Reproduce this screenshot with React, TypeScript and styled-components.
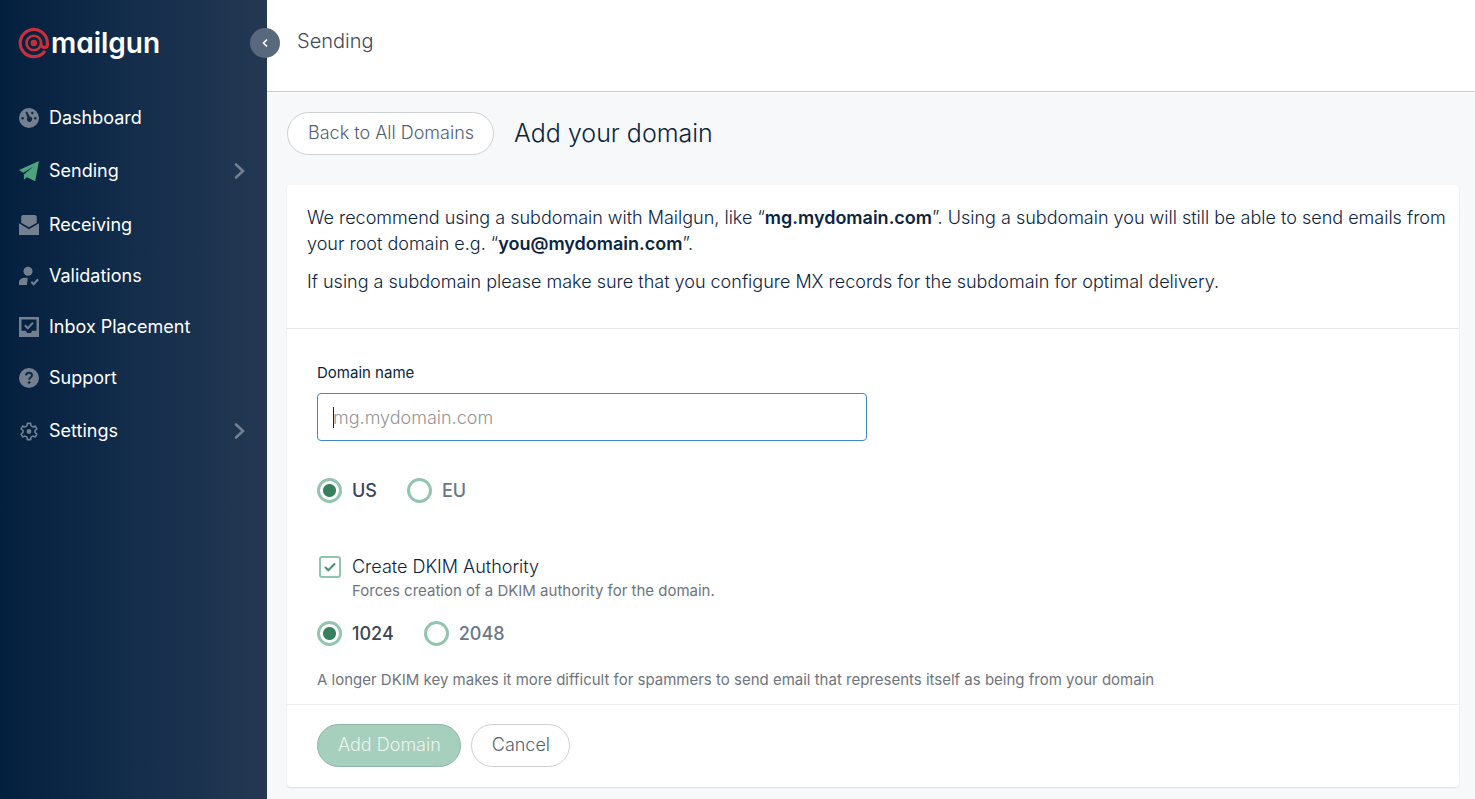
import React from "react";
import styled, { createGlobalStyle, css } from "styled-components";

const GlobalStyle = createGlobalStyle`
  *, *::before, *::after { box-sizing: border-box; }
  body {
    margin: 0;
    background: #f7f8fa;
    color: #0b2540;
    font-family: Inter, "Liberation Sans", sans-serif;
    font-size: 18px;
    font-weight: 300;
    line-height: 26px;
  }
  button, input { font: inherit; }
`;

const Page = styled.div`
  display: flex;
  min-height: 100vh;
`;

const Sidebar = styled.aside`
  position: relative;
  flex: 0 0 267px;
  background: linear-gradient(90deg, #04203f 0%, #132d4b 50%, #243852 100%);
`;

const LogoLink = styled.a`
  display: flex;
  height: 92px;
  padding: 16px 18px 0;
  text-decoration: none;
`;

const CollapseButton = styled.button`
  position: absolute;
  top: 28px;
  right: -13px;
  display: flex;
  align-items: center;
  justify-content: center;
  width: 30px;
  height: 30px;
  padding: 0;
  border: 0;
  border-radius: 50%;
  background: #58687d;
  color: #fff;
`;

const NavList = styled.ul`
  margin: 0;
  padding: 0;
  list-style: none;
`;

const NavLink = styled.a<{ $expandable?: boolean }>`
  display: flex;
  align-items: center;
  gap: 10px;
  height: ${(p) => (p.$expandable ? 56 : 51)}px;
  padding: 0 21px 0 19px;
  color: #fff;
  font-weight: 400;
  text-decoration: none;
`;

const NavIcon = styled.svg<{ $active?: boolean }>`
  flex: none;
  width: 20px;
  height: 20px;
  color: ${(p) => (p.$active ? "#4fa37c" : "#74808f")};
`;

const NavLabel = styled.span`
  flex: 1;
`;

const NavChevron = styled.svg`
  width: 12px;
  height: 18px;
  color: #74808f;
`;

const Main = styled.main`
  flex: 1;
  min-width: 0;
`;

const TopBar = styled.header`
  height: 92px;
  padding: 28px 30px 0;
  border-bottom: 1px solid #cbcdd0;
  background: #fff;
  color: #3f4b5b;
  font-size: 20px;
`;

const Content = styled.div`
  padding: 20px 16px 12px 20px;
`;

const TitleRow = styled.div`
  display: flex;
  align-items: center;
  gap: 20px;
  margin-bottom: 30px;
`;

const Title = styled.h1`
  margin: 0;
  font-size: 25px;
  font-weight: 300;
  line-height: 43px;
`;

const pill = css`
  display: inline-block;
  height: 43px;
  padding: 0 19px 2px 20px;
  border: 1px solid #cdd0d4;
  border-radius: 22px;
  background: #fff;
  color: #4f5f74;
  line-height: 39px;
`;

const BackLink = styled.a`
  ${pill}
  text-decoration: none;
`;

const Button = styled.button<{ $primary?: boolean }>`
  ${pill}
  ${(p) =>
    p.$primary &&
    css`
      border-color: #8db5a2;
      background: #a6cfbd;
      color: #e9f6ef;
    `}
`;

const Card = styled.section`
  border-radius: 4px;
  background: #fff;
  box-shadow: 0 1px 2px rgba(20, 40, 70, 0.12);
`;

const Intro = styled.div`
  padding: 20px 4px 33px 20px;
  border-bottom: 1px solid #e4e6e9;
`;

const Paragraph = styled.p`
  margin: 0 0 12px;
  &:last-child { margin: 0; }
`;

const Strong = styled.strong`
  font-weight: 600;
`;

const Fields = styled.div`
  padding: 33px 30px 13px;
`;

const FieldLabel = styled.label`
  display: block;
  margin-bottom: 10px;
  font-size: 15px;
  font-weight: 400;
  line-height: 21px;
`;

const TextInput = styled.input`
  display: block;
  width: 100%;
  max-width: 550px;
  height: 48px;
  padding: 0 15px;
  border: 1px solid #3f87c8;
  border-radius: 4px;
  outline: 0;
  background: linear-gradient(#0b2540, #0b2540) 15px center / 1px 21px no-repeat #fff;
  color: #0b2540;
  &::placeholder { color: #959595; opacity: 1; }
`;

const RadioGroup = styled.fieldset`
  display: flex;
  gap: 30px;
  margin: 0;
  padding: 0;
  border: 0;
`;

const RegionGroup = styled(RadioGroup)`
  margin: 36px 0 50px;
`;

const RadioLabel = styled.label`
  display: flex;
  align-items: center;
  gap: 10px;
  color: #6b7786;
  font-weight: 500;
  &:has(input:checked) { color: #3b4657; }
`;

const RadioText = styled.span`
  padding-top: 1px;
`;

const Radio = styled.input`
  appearance: none;
  width: 25px;
  height: 25px;
  margin: 0;
  border: 3px solid #92c5ad;
  border-radius: 50%;
  background: #fff;
  &:checked { background: radial-gradient(circle, #37805d 6px, #fff 7px); }
`;

const CheckRow = styled.div`
  display: grid;
  grid-template-columns: 25px 1fr;
  column-gap: 10px;
  align-items: center;
  margin-bottom: 18px;
`;

const Checkbox = styled.input`
  appearance: none;
  justify-self: center;
  width: 22px;
  height: 22px;
  margin: 0;
  border: 2px solid #92c5ad;
  border-radius: 3px;
  background: #fff;
`;

const CheckBoxCell = styled.span`
  position: relative;
  display: grid;
  place-items: center;
`;

const CheckMark = styled.svg`
  position: absolute;
  width: 12px;
  height: 10px;
  pointer-events: none;
`;

const Hint = styled.p`
  margin: 0;
  color: #6e7480;
  font-size: 15px;
  font-weight: 400;
  line-height: 22px;
`;

const CheckHint = styled(Hint)`
  grid-column: 2;
`;

const KeyHint = styled(Hint)`
  margin-top: 22px;
`;

const Actions = styled.div`
  display: flex;
  gap: 10px;
  padding: 19px 30px 20px;
  border-top: 1px solid #eff0f2;
`;

const Wordmark = styled.text`
  fill: #fff;
  font-family: "Liberation Sans Narrow", Inter, "Liberation Sans", sans-serif;
  font-size: 28px;
  font-weight: 600;
  font-feature-settings: "cv11";
`;

function Logo() {
  return (
    <svg width="150" height="50" viewBox="0 0 150 50" role="img" aria-label="mailgun">
      <g fill="none" stroke="#c5303a">
        <circle cx="15.8" cy="27" r="7.3" strokeWidth="2.6" />
        <path
          d="M27 34.8A13.6 13.6 0 1 1 29.4 27v1.5c0 4-5.6 4-5.9 0"
          strokeWidth="3.2"
        />
      </g>
      <circle cx="15.8" cy="27" r="3.2" fill="#c5303a" />
      <Wordmark x="33" y="37">
        mailgun
      </Wordmark>
    </svg>
  );
}

const icons: Record<string, React.ReactNode> = {
  Dashboard: (
    <>
      <circle cx="10" cy="10" r="10" fill="currentColor" />
      <g fill="#0c2945">
        <path d="M6.5 4l1.6-.6 2.5 5.1a2.7 2.7 0 1 1-2.2 1z" />
        <circle cx="3.6" cy="10.3" r="1.2" />
        <circle cx="16.3" cy="10.3" r="1.2" />
        <circle cx="13.3" cy="5" r="1.2" />
      </g>
    </>
  ),
  Sending: (
    <path
      fill="currentColor"
      d="M20 0L0 9.1l4.3 2.6L14.4 5.4 4.9 13.4v5.4l3-2.6 8.3 4z"
    />
  ),
  Receiving: (
    <g fill="currentColor">
      <path d="M2.2 1.5L3.7 0h12.6l1.5 1.5v6.3L10 12.3 2.2 7.8z" />
      <path d="M0 8.3l10 5.9 10-5.9V20H0z" />
    </g>
  ),
  Validations: (
    <g fill="currentColor">
      <circle cx="9" cy="5.3" r="4.5" />
      <path d="M0 19v-2.5c0-3 2.6-4.8 6-4.8h2.7L8 19z" />
      <path
        d="M12.3 15.8l2.4 2.4 4.4-5"
        fill="none"
        stroke="currentColor"
        strokeWidth="2.2"
      />
    </g>
  ),
  "Inbox Placement": (
    <>
      <path
        fill="currentColor"
        fillRule="evenodd"
        d="M0 0h20v20H0zM2.5 2.5v11.3h4.4L8 16h4l1.1-2.2h4.4V2.5z"
      />
      <path d="M5.8 8.3l3 2.9 5.2-5.6" fill="none" stroke="currentColor" strokeWidth="2" />
    </>
  ),
  Support: (
    <>
      <circle cx="10" cy="10" r="10" fill="currentColor" />
      <path
        d="M7 7.4c.2-1.9 1.4-2.7 3-2.7s3 .9 3 2.6c0 2.2-2.9 2.2-2.9 4.5"
        fill="none"
        stroke="#0c2945"
        strokeWidth="2"
      />
      <circle cx="10.1" cy="14.5" r="1.3" fill="#0c2945" />
    </>
  ),
  Settings: (
    <g fill="none" stroke="currentColor" strokeWidth="1.6" strokeLinejoin="round">
      <path d="M8.4 2.4h3.2l.5 2.5 1.8 1 2.4-.8 1.6 2.8-1.9 1.6v2l1.9 1.6-1.6 2.8-2.4-.8-1.8 1-.5 2.5H8.4l-.5-2.5-1.8-1-2.4.8-1.6-2.8L4 11.5v-2L2.1 7.9l1.6-2.8 2.4.8 1.8-1z" />
      <circle cx="10" cy="10.5" r="1.6" fill="currentColor" />
    </g>
  ),
};

const navItems = [
  { label: "Dashboard" },
  { label: "Sending", expandable: true, active: true },
  { label: "Receiving" },
  { label: "Validations" },
  { label: "Inbox Placement" },
  { label: "Support" },
  { label: "Settings", expandable: true },
];

function Navigation() {
  return (
    <nav>
      <NavList>
        {navItems.map((item) => (
          <li key={item.label}>
            <NavLink href="#" $expandable={item.expandable}>
              <NavIcon viewBox="0 0 20 20" $active={item.active} aria-hidden>
                {icons[item.label]}
              </NavIcon>
              <NavLabel>{item.label}</NavLabel>
              {item.expandable && (
                <NavChevron viewBox="0 0 12 18" aria-hidden>
                  <path
                    d="M2 2.5L9 9l-7 6.5"
                    fill="none"
                    stroke="currentColor"
                    strokeWidth="2.6"
                    strokeLinecap="round"
                  />
                </NavChevron>
              )}
            </NavLink>
          </li>
        ))}
      </NavList>
    </nav>
  );
}

function RadioOption(props: { name: string; label: string; defaultChecked?: boolean }) {
  return (
    <RadioLabel>
      <Radio
        type="radio"
        name={props.name}
        value={props.label}
        defaultChecked={props.defaultChecked}
      />
      <RadioText>{props.label}</RadioText>
    </RadioLabel>
  );
}

export default function App() {
  return (
    <>
      <GlobalStyle />
      <Page>
        <Sidebar>
          <LogoLink href="#">
            <Logo />
          </LogoLink>
          <Navigation />
          <CollapseButton type="button" aria-label="Collapse menu">
            <svg width="8" height="10" viewBox="0 0 8 10" aria-hidden>
              <path d="M6 1.5L2.5 5 6 8.5" fill="none" stroke="currentColor" strokeWidth="1.6" />
            </svg>
          </CollapseButton>
        </Sidebar>
        <Main>
          <TopBar>Sending</TopBar>
          <Content>
            <TitleRow>
              <BackLink href="#">Back to All Domains</BackLink>
              <Title>Add your domain</Title>
            </TitleRow>
            <Card>
              <Intro>
                <Paragraph>
                  We recommend using a subdomain with Mailgun, like “
                  <Strong>mg.mydomain.com</Strong>”. Using a subdomain you will still be able to
                  send emails from your root domain e.g. “<Strong>you@mydomain.com</Strong>”.
                </Paragraph>
                <Paragraph>
                  If using a subdomain please make sure that you configure MX records for the
                  subdomain for optimal delivery.
                </Paragraph>
              </Intro>
              <form>
                <Fields>
                  <FieldLabel htmlFor="domain">Domain name</FieldLabel>
                  <TextInput id="domain" type="text" placeholder="mg.mydomain.com" />
                  <RegionGroup aria-label="Region">
                    <RadioOption name="region" label="US" defaultChecked />
                    <RadioOption name="region" label="EU" />
                  </RegionGroup>
                  <CheckRow>
                    <CheckBoxCell>
                      <Checkbox id="dkim" type="checkbox" defaultChecked />
                      <CheckMark viewBox="0 0 12 10" aria-hidden>
                        <path d="M1 5l3.3 3.3L11 1.5" fill="none" stroke="#459370" strokeWidth="2" />
                      </CheckMark>
                    </CheckBoxCell>
                    <label htmlFor="dkim">Create DKIM Authority</label>
                    <CheckHint>Forces creation of a DKIM authority for the domain.</CheckHint>
                  </CheckRow>
                  <RadioGroup aria-label="DKIM key length">
                    <RadioOption name="key" label="1024" defaultChecked />
                    <RadioOption name="key" label="2048" />
                  </RadioGroup>
                  <KeyHint>
                    A longer DKIM key makes it more difficult for spammers to send email that
                    represents itself as being from your domain
                  </KeyHint>
                </Fields>
                <Actions>
                  <Button type="submit" $primary disabled>
                    Add Domain
                  </Button>
                  <Button type="button">Cancel</Button>
                </Actions>
              </form>
            </Card>
          </Content>
        </Main>
      </Page>
    </>
  );
}
